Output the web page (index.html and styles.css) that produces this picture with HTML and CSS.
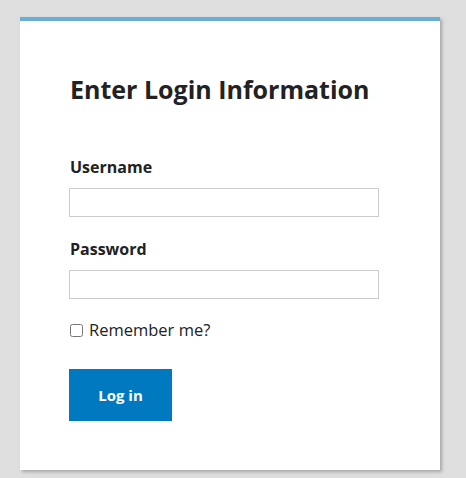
FILE: index.html
```html
<html>
<head>
    <meta charset="utf-8" />
    <title>Log in</title>
    <link rel="stylesheet" href="styles.css">
</head>

<body>
    <div id="card">
        <h1 id="title">Enter Login Information</h1>
        <form id="loginForm">
            <label class="label" for="username">Username</label>
            <input class="field" type="text" id="username" />
            <label class="label" for="password">Password</label>
            <input class="field" type="password" id="password" />
            <div class="remember">
                <input type="checkbox" id="remember" />
                <label for="remember">Remember me?</label>
            </div>
            <button type="submit" id="loginBtn">Log in</button>
        </form>
    </div>
</body>

</html>
```

FILE: styles.css
```css
body{
    padding: 17px 0 0 20px;
    margin: 0;
    background-color: #dedede;
    font-family: "Open Sans", sans-serif;
    color: #222;
}
#card {
    box-sizing: border-box;
    width: 420px;
    height: 453px;
    padding: 52px 50px 0 50px;
    background-color: #fff;
    border-top: 4px solid #6aaed8;
    box-shadow: 2px 2px 3px rgba(0, 0, 0, 0.25);
}
#title{
    margin: 0 0 51px 0;
    font-size: 25px;
    line-height: 32px;
    font-weight: 700;
    color: #222;
}
#loginForm {
    display: flex;
    flex-direction: column;
    align-items: flex-start;
}
.label {
    font-size: 16px;
    line-height: 22px;
    font-weight: 700;
    margin-bottom: 10px;
}
.field {
    box-sizing: border-box;
    width: 310px;
    height: 29px;
    margin: 0 0 21px -1px;
    border: 1px solid #ccc;
    padding: 2px 6px;
    font-family: inherit;
    font-size: 15px;
}
.remember {
    display: flex;
    align-items: center;
    font-size: 16.5px;
    line-height: 22px;
    margin-top: -1px;
}
.remember input {
    width: 13px;
    height: 13px;
    margin: 0 6px 0 0;
}
#loginBtn{
    margin: 28px 0 0 -1px;
    width: 103px;
    height: 52px;
    border: 0;
    background-color: #0079c1;
    color: #fff;
    font-family: inherit;
    font-size: 15px;
    font-weight: 700;
}
```
